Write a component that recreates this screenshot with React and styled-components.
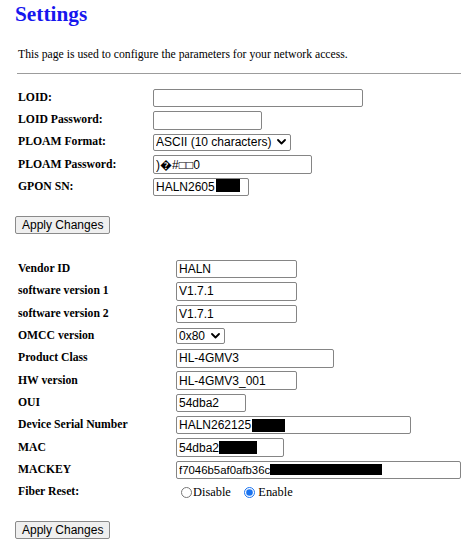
import React from "react";
import styled, { createGlobalStyle } from "styled-components";

const Global = createGlobalStyle`
  html, body { margin: 0; padding: 0; background: #ffffff; }
  body { font-family: "Liberation Serif", "Times New Roman", serif; color: #000; }
`;

const Page = styled.div`
  width: 474px;
  box-sizing: border-box;
  padding: 0 13px 0 15px;
`;

const Title = styled.h2`
  margin: 2px 0 0 0;
  font-family: "Liberation Serif", serif;
  font-size: 21.3px;
  line-height: 24px;
  font-weight: bold;
  color: #1616ee;
`;

const Intro = styled.p`
  margin: 22px 0 0 3px;
  font-size: 11.7px;
  line-height: 14px;
`;

const Rule = styled.hr`
  margin: 11px 0 0 2px;
  border: none;
  border-top: 1px solid #9c9c9c;
  height: 0;
`;

const Table = styled.div`
  display: grid;
  grid-template-columns: ${(p) => p.$labelWidth}px 1fr;
  grid-auto-rows: ${(p) => p.$rowHeight}px;
  align-items: center;
  margin: ${(p) => p.$top}px 0 0 3px;
`;

const Label = styled.div`
  font-size: 11.7px;
  font-weight: bold;
  line-height: 14px;
  white-space: nowrap;
`;

const Field = styled.div`
  position: relative;
  display: flex;
  align-items: center;
  width: ${(p) => p.$width}px;
  height: ${(p) => p.$height || 18.5}px;
`;

const TextInput = styled.input`
  box-sizing: border-box;
  width: 100%;
  height: 100%;
  margin: 0;
  padding: 1px 2px;
  border: 1px solid #858585;
  border-radius: 2px;
  background: #fff;
  font-family: "Liberation Sans", Arial, sans-serif;
  font-size: ${(p) => p.$size || 12}px;
  color: #000;
  outline: none;
`;

const Select = styled.select`
  box-sizing: border-box;
  width: 100%;
  height: 100%;
  margin: 0;
  padding: 0 18px 0 2px;
  border: 1px solid #858585;
  border-radius: 2px;
  background: #fff;
  font-family: "Liberation Sans", Arial, sans-serif;
  font-size: 12px;
  color: #000;
  appearance: none;
  -webkit-appearance: none;
  outline: none;
`;

const Chevron = styled.svg`
  position: absolute;
  right: 5px;
  top: 50%;
  width: 9px;
  height: 6px;
  margin-top: -3px;
  pointer-events: none;
`;

const Redact = styled.span`
  position: absolute;
  left: ${(p) => p.$left}px;
  top: ${(p) => p.$top}px;
  width: ${(p) => p.$w}px;
  height: ${(p) => p.$h}px;
  background: #000;
`;

const Button = styled.button`
  box-sizing: border-box;
  height: 18px;
  padding: 0 6px;
  margin: ${(p) => p.$top}px 0 0 0;
  display: block;
  border: 1px solid #8a8a8a;
  border-radius: 2px;
  background: #efefef;
  font-family: "Liberation Sans", Arial, sans-serif;
  font-size: 12px;
  line-height: 16px;
  color: #000;
`;

const RadioGroup = styled.div`
  display: flex;
  align-items: center;
  padding-left: 4.5px;
  font-size: 12.4px;
  height: 22px;
  padding-top: 1px;
`;

const RadioItem = styled.label`
  display: flex;
  align-items: center;
  gap: 1px;
  margin-right: ${(p) => p.$gap || 0}px;
`;

const Radio = styled.input`
  width: 11.5px;
  height: 11.5px;
  margin: 0;
  accent-color: #1a73f0;
`;

function Drop({ width, height, value, options }) {
  return (
    <Field $width={width} $height={height}>
      <Select defaultValue={value}>
        {options.map((o) => (
          <option key={o}>{o}</option>
        ))}
      </Select>
      <Chevron viewBox="0 0 9 6">
        <path d="M1 1 L4.5 4.5 L8 1" fill="none" stroke="#000" strokeWidth="1.8" strokeLinecap="round" strokeLinejoin="round" />
      </Chevron>
    </Field>
  );
}

function Text({ width, value = "", redact, size }) {
  return (
    <Field $width={width}>
      <TextInput readOnly value={value} $size={size} />
      {redact && <Redact $left={redact[0]} $top={redact[1]} $w={redact[2]} $h={redact[3]} />}
    </Field>
  );
}

export default function App() {
  return (
    <>
      <Global />
      <Page>
        <Title>Settings</Title>
        <Intro>This page is used to configure the parameters for your network access.</Intro>
        <Rule />

        <Table $labelWidth={135} $rowHeight={22.2} $top={13}>
          <Label>LOID:</Label>
          <Text width={210} />
          <Label>LOID Password:</Label>
          <Text width={108.5} />
          <Label>PLOAM Format:</Label>
          <Drop width={137.5} height={17} value="ASCII (10 characters)" options={["ASCII (10 characters)", "HEX (20 characters)"]} />
          <Label>PLOAM Password:</Label>
          <Text width={159} value={")\uFFFD#\u25A1\u25A10"} />
          <Label>GPON SN:</Label>
          <Text width={96} value="HALN2605" redact={[63, 1.6, 24.3, 13]} />
        </Table>

        <Button $top={17.7}>Apply Changes</Button>

        <Table $labelWidth={158} $rowHeight={22.3} $top={24.4}>
          <Label>Vendor ID</Label>
          <Text width={121} value="HALN" />
          <Label>software version 1</Label>
          <Text width={121} value="V1.7.1" />
          <Label>software version 2</Label>
          <Text width={121} value="V1.7.1" />
          <Label>OMCC version</Label>
          <Drop width={49} height={16} value="0x80" options={["0x80", "0xA0"]} />
          <Label>Product Class</Label>
          <Text width={158} value="HL-4GMV3" />
          <Label>HW version</Label>
          <Text width={121} value="HL-4GMV3_001" />
          <Label>OUI</Label>
          <Text width={70} value="54dba2" />
          <Label>Device Serial Number</Label>
          <Text width={234.5} value="HALN262125" redact={[76, 3, 33.3, 13]} />
          <Label>MAC</Label>
          <Text width={108} value="54dba2" redact={[42.7, 2.6, 38, 12.7]} />
          <Label>MACKEY</Label>
          <Text width={285} value="f7046b5af0afb36c" size={11.4} redact={[94, 3.3, 112.3, 11.4]} />
          <Label>Fiber Reset:</Label>
          <RadioGroup>
            <RadioItem $gap={13}>
              <Radio type="radio" name="fiber" value="0" />
              Disable
            </RadioItem>
            <RadioItem>
              <Radio type="radio" name="fiber" value="1" defaultChecked />
              <span style={{ marginLeft: 2 }}>Enable</span>
            </RadioItem>
          </RadioGroup>
        </Table>

        <Button $top={17.3}>Apply Changes</Button>
      </Page>
    </>
  );
}
